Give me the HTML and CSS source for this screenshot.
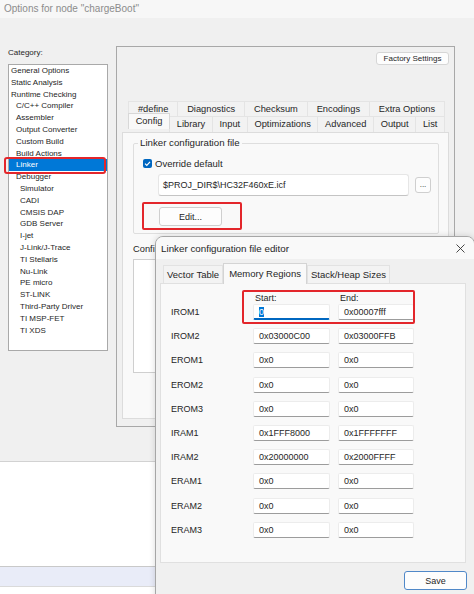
FILE: index.html
```html
<!DOCTYPE html>
<html lang="en">
<head>
  <meta charset="UTF-8">
  <meta name="viewport" content="width=device-width, initial-scale=1.0">
  <title>Options for node "chargeBoot"</title>
  <link rel="stylesheet" href="styles.css">
</head>
<body>
<div class="screen">

  <!-- Options window -->
  <div class="options-win">
    <div class="titlebar">Options for node "chargeBoot"</div>

    <div class="options-body">
      <!-- Category list -->
      <div class="category">
        <div class="cat-label">Category:</div>
        <ul class="cat-list">
          <li>General Options</li>
          <li>Static Analysis</li>
          <li>Runtime Checking</li>
          <li class="lvl1">C/C++ Compiler</li>
          <li class="lvl1">Assembler</li>
          <li class="lvl1">Output Converter</li>
          <li class="lvl1">Custom Build</li>
          <li class="lvl1">Build Actions</li>
          <li class="lvl1 selected">Linker</li>
          <li class="lvl1">Debugger</li>
          <li class="lvl2">Simulator</li>
          <li class="lvl2">CADI</li>
          <li class="lvl2">CMSIS DAP</li>
          <li class="lvl2">GDB Server</li>
          <li class="lvl2">I-jet</li>
          <li class="lvl2">J-Link/J-Trace</li>
          <li class="lvl2">TI Stellaris</li>
          <li class="lvl2">Nu-Link</li>
          <li class="lvl2">PE micro</li>
          <li class="lvl2">ST-LINK</li>
          <li class="lvl2">Third-Party Driver</li>
          <li class="lvl2">TI MSP-FET</li>
          <li class="lvl2">TI XDS</li>
        </ul>
      </div>

      <!-- Settings frame -->
      <div class="settings-frame">
        <div class="factory-row">
          <button class="btn factory">Factory Settings</button>
        </div>

        <div class="tabctl">
          <div class="tabrow">
            <div class="tab">#define</div>
            <div class="tab">Diagnostics</div>
            <div class="tab">Checksum</div>
            <div class="tab">Encodings</div>
            <div class="tab">Extra Options</div>
          </div>
          <div class="tabrow">
            <div class="tab active">Config</div>
            <div class="tab">Library</div>
            <div class="tab">Input</div>
            <div class="tab">Optimizations</div>
            <div class="tab">Advanced</div>
            <div class="tab">Output</div>
            <div class="tab">List</div>
          </div>

          <div class="tabpage">
            <fieldset class="group">
              <legend>Linker configuration file</legend>
              <div class="check">
                <svg class="checkbox" width="9" height="9" viewBox="0 0 9 9">
                  <rect width="9" height="9" rx="2" fill="#0067c0"/>
                  <polyline points="2,4.6 3.8,6.4 7,2.8" fill="none" stroke="#fff" stroke-width="1.2"/>
                </svg>
                <span>Override default</span>
              </div>
              <div class="path-row">
                <div class="path-input">$PROJ_DIR$\HC32F460xE.icf</div>
                <button class="btn browse">...</button>
              </div>
              <div class="edit-mark">
                <button class="btn edit">Edit...</button>
              </div>
            </fieldset>
            <!-- only the start of this label shows beside the dialog -->
            <div class="sym-label">Confi</div>
            <div class="sym-box"></div>
          </div>
        </div>
      </div>
    </div>
  </div>

  <!-- Window behind -->
  <div class="behind">
    <div class="behind-row"></div>
  </div>

  <!-- Linker configuration file editor dialog -->
  <div class="dialog">
    <div class="dlg-title">
      <span>Linker configuration file editor</span>
      <svg width="9" height="9" viewBox="0 0 9 9">
        <path d="M0.5 0.5 L8.5 8.5 M8.5 0.5 L0.5 8.5" stroke="#333" stroke-width="0.9"/>
      </svg>
    </div>

    <div class="dlg-body">
      <div class="dlg-tabs">
        <div class="dtab">Vector Table</div>
        <div class="dtab active">Memory Regions</div>
        <div class="dtab">Stack/Heap Sizes</div>
      </div>

      <div class="dlg-panel">
        <div class="mem-rows">
          <div class="mem-row">
            <div class="mem-name">IROM1</div>
            <div>
              <div class="field-head">Start:</div>
              <div class="field focused"><span class="sel">0</span></div>
            </div>
            <div>
              <div class="field-head">End:</div>
              <div class="field">0x00007fff</div>
            </div>
            <div class="mark"></div>
          </div>
          <div class="mem-row">
            <div class="mem-name">IROM2</div>
            <div class="field">0x03000C00</div>
            <div class="field">0x03000FFB</div>
          </div>
          <div class="mem-row">
            <div class="mem-name">EROM1</div>
            <div class="field">0x0</div>
            <div class="field">0x0</div>
          </div>
          <div class="mem-row">
            <div class="mem-name">EROM2</div>
            <div class="field">0x0</div>
            <div class="field">0x0</div>
          </div>
          <div class="mem-row">
            <div class="mem-name">EROM3</div>
            <div class="field">0x0</div>
            <div class="field">0x0</div>
          </div>
          <div class="mem-row">
            <div class="mem-name">IRAM1</div>
            <div class="field">0x1FFF8000</div>
            <div class="field">0x1FFFFFFF</div>
          </div>
          <div class="mem-row">
            <div class="mem-name">IRAM2</div>
            <div class="field">0x20000000</div>
            <div class="field">0x2000FFFF</div>
          </div>
          <div class="mem-row">
            <div class="mem-name">ERAM1</div>
            <div class="field">0x0</div>
            <div class="field">0x0</div>
          </div>
          <div class="mem-row">
            <div class="mem-name">ERAM2</div>
            <div class="field">0x0</div>
            <div class="field">0x0</div>
          </div>
          <div class="mem-row">
            <div class="mem-name">ERAM3</div>
            <div class="field">0x0</div>
            <div class="field">0x0</div>
          </div>
        </div>
      </div>

      <div class="dlg-actions">
        <button class="btn save">Save</button>
      </div>
    </div>
  </div>

</div>
</body>
</html>
```

FILE: styles.css
```css
/* General */
body {
  margin: 0;
  background-color: #f0f0f0;
  font-family: "Liberation Sans", Arial, sans-serif;
  color: #262626;
}

.screen {
  position: relative;
  width: 474px;
  height: 594px;
  overflow: hidden;
}

.btn {
  font-family: inherit;
  color: #262626;
  background-color: #fdfdfd;
  border: 1px solid #cfcfcf;
  border-radius: 3px;
  padding: 0;
  box-sizing: border-box;
}

/* Options window */
.options-win {
  height: 462px;
  box-sizing: border-box;
  background-color: #f0f0f0;
  border-bottom: 1px solid #d2d2d2;
}

.titlebar {
  height: 18px;
  line-height: 17px;
  padding-left: 4px;
  font-size: 10px;
  color: #8c8c8c;
  background-color: #f7f7f7;
}

.options-body {
  display: flex;
}

/* Category list */
.category {
  width: 116px;
  flex: none;
  padding-left: 8px;
  box-sizing: border-box;
}

.cat-label {
  margin-top: 30px;
  font-size: 8px;
  line-height: 10px;
}

.cat-list {
  list-style: none;
  margin: 6px 0 0;
  padding: 0;
  width: 100px;
  height: 287px;
  box-sizing: border-box;
  border: 1px solid #a9a9a9;
  background-color: #fff;
}

.cat-list li {
  position: relative;
  font-size: 8px;
  line-height: 11.8px;
  padding-left: 2px;
  white-space: nowrap;
}

.cat-list .lvl1 {
  padding-left: 7px;
}

.cat-list .lvl2 {
  padding-left: 11px;
}

.cat-list .selected {
  background-color: #0078d7;
  color: #fff;
}

.cat-list .selected::after {
  content: '';
  position: absolute;
  left: -5px;
  right: 1px;
  top: -2px;
  bottom: -3px;
  border: 2px solid #e3262b;
  border-radius: 3px;
}

/* Settings frame */
.settings-frame {
  margin-top: 28px;
  width: 339px;
  height: 381px;
  box-sizing: border-box;
  border: 1px solid #a8a8a8;
  padding: 5px 5px 0;
  display: flex;
  flex-direction: column;
}

.factory-row {
  display: flex;
  justify-content: flex-end;
}

.factory {
  width: 73px;
  height: 13px;
  font-size: 8px;
  line-height: 11px;
  border-color: #d6d6d6;
}

.tabctl {
  margin-top: 36px;
  display: flex;
  flex-direction: column;
}

.tabrow {
  display: flex;
  margin: 0 4px 0 7px;
}

.tab {
  flex: 1 1 auto;
  padding: 0 4px;
  height: 15px;
  line-height: 14px;
  box-sizing: border-box;
  border: 1px solid #e4e4e4;
  border-bottom: none;
  margin-left: -1px;
  text-align: center;
  font-size: 9.3px;
  white-space: nowrap;
  background-color: #f2f2f2;
}

.tabrow + .tabrow .tab {
  height: 16px;
  line-height: 15px;
}

.tab.active {
  position: relative;
  z-index: 1;
  height: 19px;
  margin-top: -3px;
  line-height: 17px;
  background-color: #f9f9f9;
  border-color: #d8d8d8;
}

.tabpage {
  height: 287px;
  box-sizing: border-box;
  border: 1px solid #dcdcdc;
  background-color: #f9f9f9;
  overflow: hidden;
}

.group {
  margin: 4px 9px 0 10px;
  padding: 0 7px 3px 9px;
  border: 1px solid #dedede;
  border-radius: 2px;
}

.group legend {
  margin-left: -5px;
  padding: 0 2px;
  font-size: 9.7px;
  line-height: 12px;
}

.check {
  display: flex;
  align-items: center;
  gap: 3px;
  margin-top: 10px;
  height: 9px;
  font-size: 9.5px;
}

.checkbox {
  flex: none;
}

.path-row {
  display: flex;
  align-items: center;
  gap: 6px;
  margin: 6px 0 0 15px;
}

.path-input {
  width: 251px;
  height: 22px;
  box-sizing: border-box;
  padding-left: 4px;
  line-height: 21px;
  font-size: 9px;
  background-color: #fff;
  border: 1px solid #e6e6e6;
  border-bottom-color: #c4c4c4;
  border-radius: 3px;
}

.browse {
  width: 16px;
  height: 16px;
  font-size: 8px;
  line-height: 12px;
}

.edit-mark {
  width: 100px;
  height: 28px;
  box-sizing: border-box;
  margin: 6px 0 0 -1px;
  border: 2px solid #e3262b;
  border-radius: 2px;
}

.edit {
  display: block;
  width: 63px;
  height: 19px;
  margin: 3px 0 0 15px;
  font-size: 9px;
}

.sym-label {
  margin: 9px 0 0 10px;
  font-size: 9.3px;
  line-height: 12px;
  white-space: nowrap;
}

.sym-box {
  margin: 4px 0 0 10px;
  width: 306px;
  height: 114px;
  box-sizing: border-box;
  border: 1px solid #cfcfcf;
  background-color: #fff;
}

/* Window behind */
.behind {
  height: 132px;
  background-color: #fff;
  padding-top: 104px;
  box-sizing: border-box;
}

.behind-row {
  height: 21px;
  box-sizing: border-box;
  border-top: 1px solid #c9c9c9;
  border-bottom: 1px solid #dadada;
  background-color: #e9ecf8;
}

/* Dialog */
.dialog {
  position: absolute;
  left: 155px;
  top: 236px;
  width: 320px;
  height: 380px;
  box-sizing: border-box;
  border: 1px solid #a6a6a6;
  border-radius: 8px 8px 0 0;
  background-color: #f0f0f0;
  box-shadow: 0 0 6px rgba(0, 0, 0, 0.15);
  overflow: hidden;
}

.dlg-title {
  height: 22px;
  display: flex;
  align-items: center;
  justify-content: space-between;
  padding: 0 9px 0 5px;
  background-color: #f9f9f9;
  font-size: 9.8px;
}

.dlg-body {
  display: flex;
  flex-direction: column;
  padding: 6px 7px 0 4px;
}

.dlg-tabs {
  display: flex;
  margin-left: 3px;
}

.dtab {
  flex: none;
  height: 18px;
  line-height: 17px;
  padding: 0 3px;
  box-sizing: border-box;
  border: 1px solid #e2e2e2;
  border-bottom: none;
  font-size: 9.5px;
  white-space: nowrap;
  background-color: #f3f3f3;
}

.dtab.active {
  position: relative;
  z-index: 1;
  height: 21px;
  margin-top: -2px;
  line-height: 19px;
  padding: 0 5px;
  background-color: #f9f9f9;
  border-color: #d4d4d4;
}

.dlg-panel {
  width: 306px;
  height: 280px;
  box-sizing: border-box;
  margin-top: -1px;
  border: 1px solid #e0e0e0;
  background-color: #f9f9f9;
  padding: 9px 0 0 10px;
}

.mem-rows {
  display: flex;
  flex-direction: column;
  gap: 8.2px;
}

.mem-row {
  position: relative;
  display: grid;
  grid-template-columns: 74px 77px 76px;
  column-gap: 8px;
  align-items: end;
}

.mem-name {
  font-size: 9px;
  line-height: 16px;
}

.field-head {
  font-size: 9px;
  line-height: 11px;
  padding-left: 2px;
}

.field {
  height: 16px;
  box-sizing: border-box;
  padding-left: 5px;
  font-size: 9px;
  line-height: 14px;
  background-color: #fff;
  border: 1px solid #ececec;
  border-bottom-color: #9c9c9c;
  border-radius: 2px;
}

.field.focused {
  border-bottom: 2px solid #0067c0;
}

.sel {
  background-color: #0078d7;
  color: #fff;
}

.mark {
  position: absolute;
  left: 71px;
  top: -3px;
  width: 173px;
  height: 34px;
  box-sizing: border-box;
  border: 2px solid #e3262b;
  border-radius: 2px;
}

.dlg-actions {
  display: flex;
  justify-content: flex-end;
  margin-top: 8px;
}

.save {
  width: 63px;
  height: 19px;
  font-size: 9px;
  border-color: #5088c8;
}
```
